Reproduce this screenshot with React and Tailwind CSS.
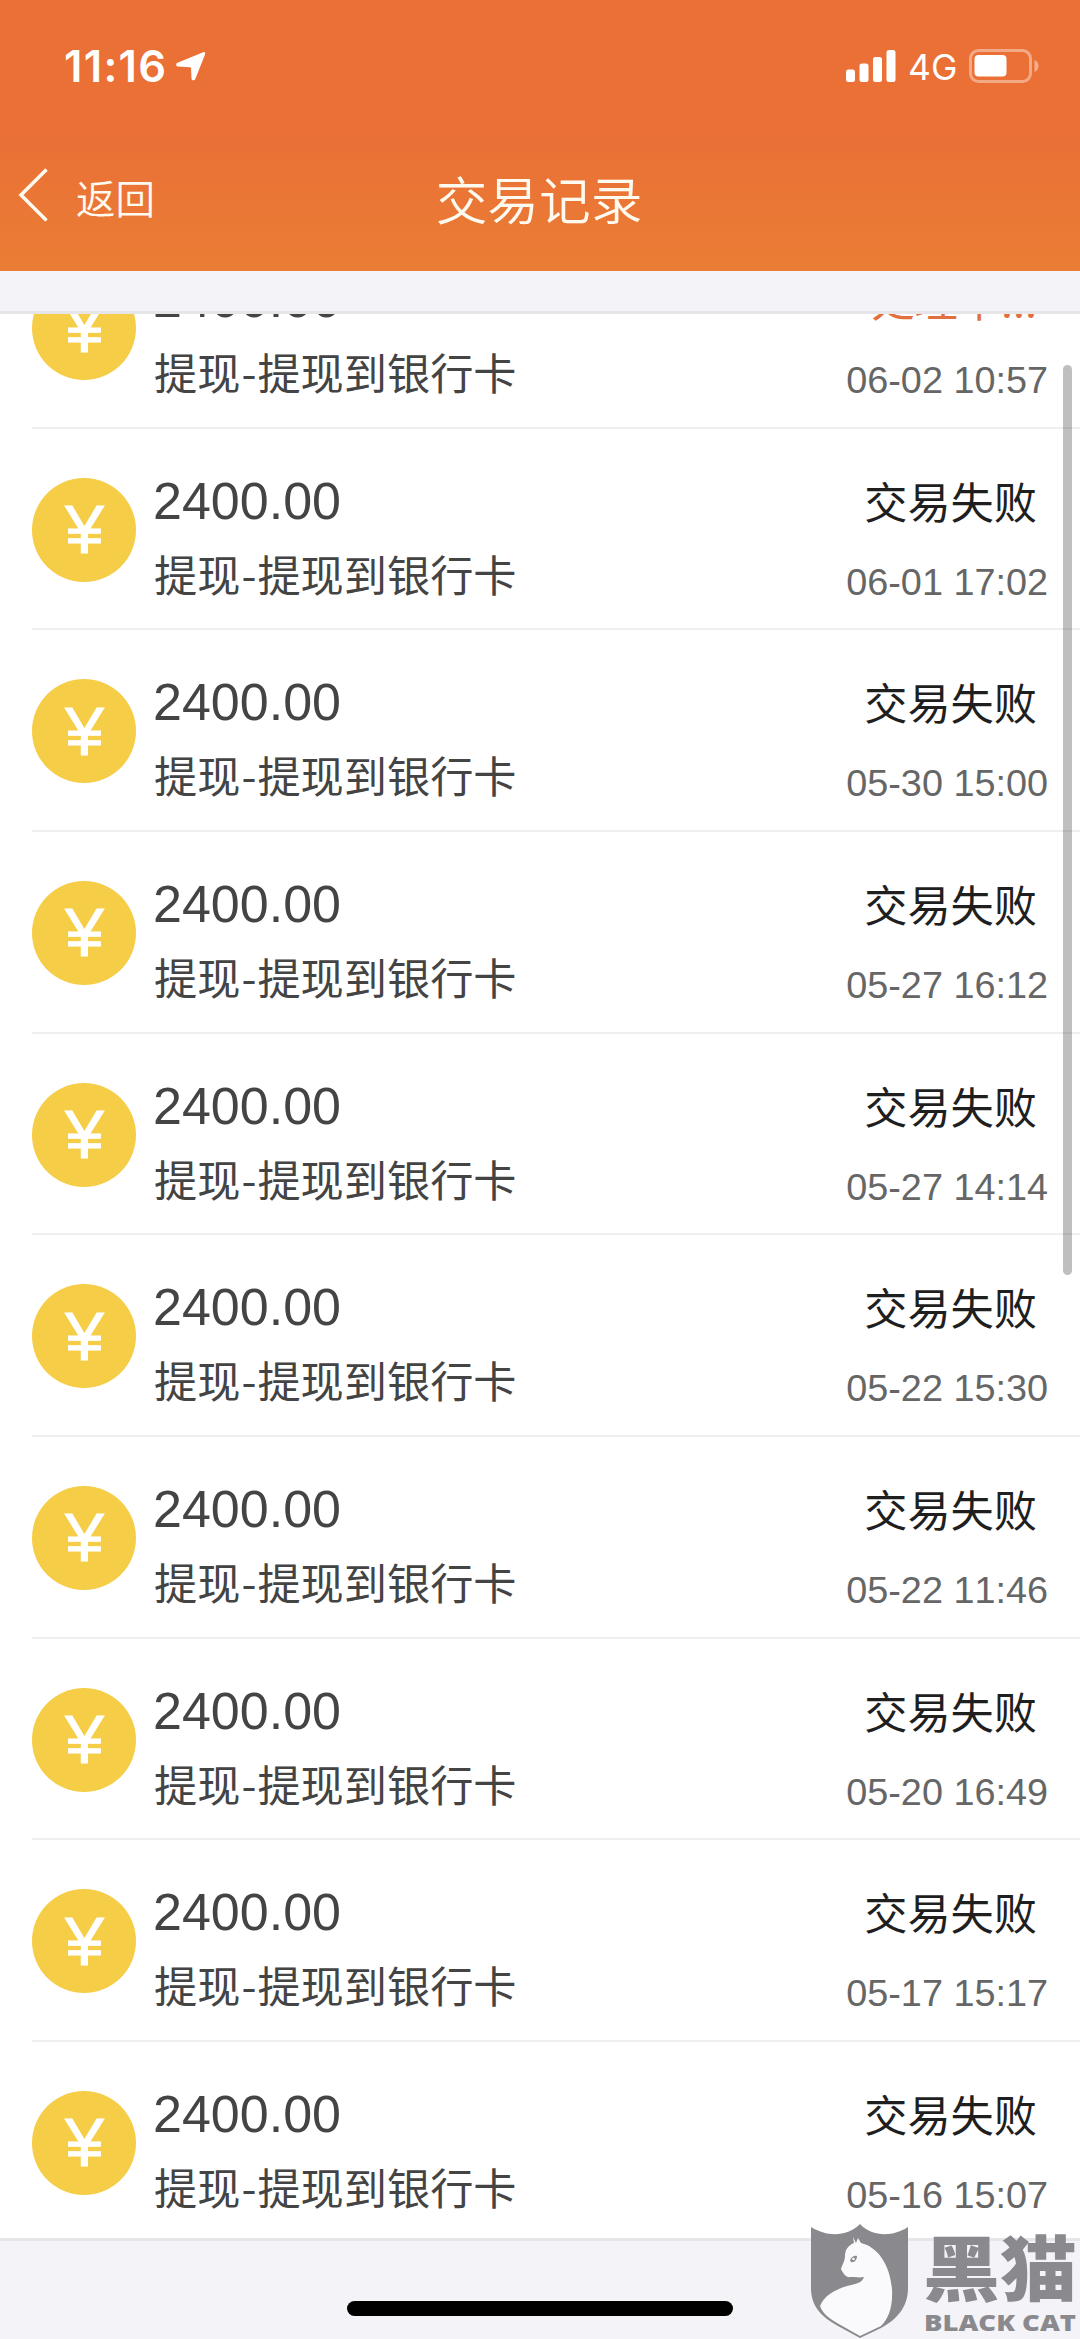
import React from 'react';

const records = [
  { amount: '2400.00', status: '处理中...', time: '06-02 10:57', pending: true },
  { amount: '2400.00', status: '交易失败', time: '06-01 17:02' },
  { amount: '2400.00', status: '交易失败', time: '05-30 15:00' },
  { amount: '2400.00', status: '交易失败', time: '05-27 16:12' },
  { amount: '2400.00', status: '交易失败', time: '05-27 14:14' },
  { amount: '2400.00', status: '交易失败', time: '05-22 15:30' },
  { amount: '2400.00', status: '交易失败', time: '05-22 11:46' },
  { amount: '2400.00', status: '交易失败', time: '05-20 16:49' },
  { amount: '2400.00', status: '交易失败', time: '05-17 15:17' },
  { amount: '2400.00', status: '交易失败', time: '05-16 15:07' },
];

const StatusBar = () => (
  <div className="flex h-[132px] items-center justify-between pl-[64px] pr-[40px] font-['Inter',sans-serif] text-white">
    <div className="flex items-center">
      <span className="w-[112px] pt-[2px] text-[43.5px] font-semibold leading-none tracking-[1.3px]">11:16</span>
      <svg width="30" height="30" viewBox="0 0 30 30" fill="currentColor">
        <path d="M27.2 1.2 1.500 11.800c-2 .9-1.500 3.600.600 3.700l12 .700c.600 0 .900.300.900.900l.500 10.300c.100 2.200 2.900 2.700 3.800.700L29 3.400c.700-1.500-.400-2.800-1.800-2.200z" />
      </svg>
    </div>
    <div className="flex items-center">
      <svg width="50" height="32" viewBox="0 0 50 32" fill="currentColor">
        <rect x="0" y="19.500" width="9" height="12.500" rx="2.500" />
        <rect x="13.500" y="13.500" width="9" height="18.500" rx="2.500" />
        <rect x="27" y="7" width="9" height="25" rx="2.500" />
        <rect x="40.500" y="0" width="9" height="32" rx="2.500" />
      </svg>
      <span className="ml-[12px] w-[61px] pt-[3px] text-[35.5px] leading-none">4G</span>
      <svg width="71" height="34" viewBox="0 0 71 34">
        <rect x="1.500" y="1.500" width="60" height="31" rx="8" fill="none" stroke="#fff" strokeOpacity="0.400" strokeWidth="3" />
        <rect x="5.500" y="6" width="32" height="21.500" rx="4" fill="#fff" />
        <path d="M65.500 11c5.300 2 5.300 10 0 12z" fill="#fff" fillOpacity="0.450" />
      </svg>
    </div>
  </div>
);

const Header = () => (
  <header className="h-[271px] shrink-0 bg-linear-to-b from-[#ea7036] from-50% to-[#ea7d35]">
    <StatusBar />
    <div className="grid h-[138px] grid-cols-3 items-center pb-[6px] pl-[18px] font-['Noto_Sans_CJK_SC',sans-serif] text-[#fffaf0]">
      <div className="flex items-center pb-[7px]">
        <svg width="30" height="54" viewBox="0 0 30 54" fill="none" stroke="currentColor" strokeWidth="3.500">
          <path d="M28.500 1.500 3 27l25.500 25.500" />
        </svg>
        <span className="ml-[28px] pt-[4px] text-[39.5px] font-[350] leading-[48px]">返回</span>
      </div>
      <h1 className="-ml-[20px] text-center text-[51.7px] font-[350] leading-[60px]">交易记录</h1>
    </div>
  </header>
);

const RecordRow = ({ record }) => (
  <li className="ml-8 flex h-[201.66px] shrink-0 border-b-2 border-[#efeff1] pr-[32px]">
    <div className="mt-[49px] flex size-[104px] shrink-0 items-center justify-center rounded-full bg-[#f6cd46] pl-px font-['Liberation_Sans',sans-serif] text-[69px] leading-none text-white [-webkit-text-stroke:1.2px_white]">
      ¥
    </div>
    <div className="ml-[17px] mt-[42px] flex flex-1 flex-col text-[#444]">
      <span className="font-['Liberation_Sans',sans-serif] text-[52px] leading-[60px]">{record.amount}</span>
      <span className="ml-px mt-[12px] font-['Noto_Sans_CJK_SC',sans-serif] text-[43.2px] leading-[60px]">
        提现<span className="mx-px">-</span>提现到银行卡
      </span>
    </div>
    <div className="mt-[41px] flex flex-col items-end">
      <span
        className={`mr-[11px] font-['Noto_Sans_CJK_SC',sans-serif] text-[43.2px] leading-[60px] ${
          record.pending ? 'text-[#e2703f]' : 'text-[#1f1f1f]'
        }`}
      >
        {record.status}
      </span>
      <span className="mt-[27px] font-['Liberation_Sans',sans-serif] text-[37.8px] leading-[50px] text-[#666] [font-kerning:none]">
        {record.time}
      </span>
    </div>
  </li>
);

const Watermark = () => (
  <div className="absolute left-[811px] top-[2224px] text-[#8a898d]">
    <svg width="269" height="115" viewBox="0 0 269 115">
      <path d="M0 3c16 10 36 10 49-3 12 13 33 13 48 3v61c0 20-12 32-27 40L49 114 27 102C11 93 0 83 0 64z" fill="currentColor" />
      <path
        d="M42 13l3 6 2-5 3 5c17 4 29 22 31 46 1 17-3 29-11 37L49 112 26 99C17 94 11 88 9 82c4-10 14-16 27-20 9-2 15-3 17-9-5 1-9 0-14 0-4 1-7-4-9-8 1-4 4-8 4-13 0-7 4-11 9-13z"
        fill="#fafafd"
      />
      <path d="M39 36c2-4 5-5 7-4 0 4-3 7-6 6z" fill="currentColor" />
      <circle cx="42.500" cy="35" r="1.300" fill="#fafafd" />
      <text x="112" y="71" fill="currentColor" textLength="154" lengthAdjust="spacingAndGlyphs" className="font-['Noto_Sans_CJK_SC',sans-serif] text-[71px] font-black">
        黑猫
      </text>
      <text x="113" y="107" fill="currentColor" textLength="152" lengthAdjust="spacingAndGlyphs" className="font-['Open_Sans',sans-serif] text-[23px] font-extrabold">
        BLACK CAT
      </text>
    </svg>
  </div>
);

const App = () => {
  return (
    <div className="relative flex h-[2339px] w-[1080px] flex-col overflow-hidden bg-[#f3f3f8]">
      <Header />
      <main className="relative mt-[40px] h-[1930px] shrink-0 overflow-hidden border-y-[3px] border-[#e6e6e9] bg-white">
        <ul className="-mt-[87px] flex flex-col">
          {records.map((record) => (
            <RecordRow key={record.time} record={record} />
          ))}
        </ul>
        {/* Scroll indicator */}
        <div className="absolute right-[8px] top-[51px] h-[910px] w-[9px] rounded-full bg-black/25" />
      </main>
      {/* Home indicator */}
      <div className="mx-auto mt-[60px] h-[15px] w-[386px] shrink-0 rounded-full bg-black" />
      <Watermark />
    </div>
  );
};

export default App;
